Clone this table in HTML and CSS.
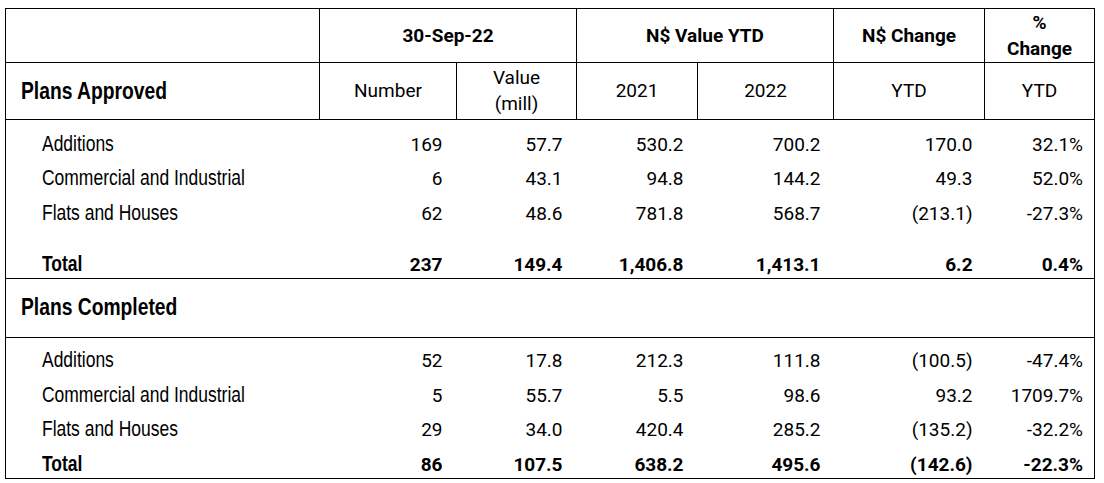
FILE: index.html
```html
<!DOCTYPE html>
<html lang="en">
<head>
<meta charset="utf-8">
<title>Building Plans</title>
<link rel="stylesheet" href="styles.css">
</head>
<body>
<table class="report">
  <colgroup>
    <col class="c-label">
    <col class="c-num">
    <col class="c-val">
    <col class="c-y1">
    <col class="c-y2">
    <col class="c-chg">
    <col class="c-pct">
  </colgroup>
  <thead>
    <tr class="head-top">
      <th></th>
      <th colspan="2">30-Sep-22</th>
      <th colspan="2">N$ Value YTD</th>
      <th>N$ Change</th>
      <th>%<br>Change</th>
    </tr>
    <tr class="head-sub">
      <th class="section-label"><span class="narrow">Plans Approved</span></th>
      <th>Number</th>
      <th>Value<br>(mill)</th>
      <th>2021</th>
      <th>2022</th>
      <th>YTD</th>
      <th>YTD</th>
    </tr>
  </thead>
  <tbody>
    <tr class="spacer-top"><td colspan="7"></td></tr>
    <tr class="row">
      <td class="label"><span class="narrow">Additions</span></td><td class="num">169</td><td class="num">57.7</td><td class="num">530.2</td><td class="num y2">700.2</td><td class="num chg">170.0</td><td class="num pct">32.1%</td>
    </tr>
    <tr class="row">
      <td class="label"><span class="narrow">Commercial and Industrial</span></td><td class="num">6</td><td class="num">43.1</td><td class="num">94.8</td><td class="num y2">144.2</td><td class="num chg">49.3</td><td class="num pct">52.0%</td>
    </tr>
    <tr class="row">
      <td class="label"><span class="narrow">Flats and Houses</span></td><td class="num">62</td><td class="num">48.6</td><td class="num">781.8</td><td class="num y2">568.7</td><td class="num chg">(213.1)</td><td class="num pct">-27.3%</td>
    </tr>
    <tr class="spacer-mid"><td colspan="7"></td></tr>
    <tr class="total total-a">
      <td class="label"><span class="narrow">Total</span></td><td class="num">237</td><td class="num">149.4</td><td class="num">1,406.8</td><td class="num y2">1,413.1</td><td class="num chg">6.2</td><td class="num pct">0.4%</td>
    </tr>
    <tr class="section">
      <td class="section-label"><span class="narrow">Plans Completed</span></td><td colspan="6"></td>
    </tr>
    <tr class="spacer-top2"><td colspan="7"></td></tr>
    <tr class="row">
      <td class="label"><span class="narrow">Additions</span></td><td class="num">52</td><td class="num">17.8</td><td class="num">212.3</td><td class="num y2">111.8</td><td class="num chg">(100.5)</td><td class="num pct">-47.4%</td>
    </tr>
    <tr class="row">
      <td class="label"><span class="narrow">Commercial and Industrial</span></td><td class="num">5</td><td class="num">55.7</td><td class="num">5.5</td><td class="num y2">98.6</td><td class="num chg">93.2</td><td class="num pct">1709.7%</td>
    </tr>
    <tr class="row">
      <td class="label"><span class="narrow">Flats and Houses</span></td><td class="num">29</td><td class="num">34.0</td><td class="num">420.4</td><td class="num y2">285.2</td><td class="num chg">(135.2)</td><td class="num pct">-32.2%</td>
    </tr>
    <tr class="total total-b">
      <td class="label"><span class="narrow">Total</span></td><td class="num">86</td><td class="num">107.5</td><td class="num">638.2</td><td class="num y2">495.6</td><td class="num chg">(142.6)</td><td class="num pct">-22.3%</td>
    </tr>
  </tbody>
</table>
</body>
</html>
```

FILE: styles.css
```css
html, body {
  margin: 0;
  padding: 0;
  background: #ffffff;
}

.report {
  border-collapse: collapse;
  table-layout: fixed;
  width: 1089px;
  margin: 8px 0 0 5px;
  border: 1px solid #000;
  color: #000;
}

.c-label { width: 314px; }
.c-num { width: 137px; }
.c-val { width: 120px; }
.c-y1 { width: 121px; }
.c-y2 { width: 136px; }
.c-chg { width: 151px; }
.c-pct { width: 110px; }

.report th,
.report td {
  padding: 0;
}

.report .head-top th,
.report .head-sub th {
  border: 1px solid #000;
  font-family: Roboto, "Liberation Sans", sans-serif;
  font-size: 19px;
  line-height: 26px;
  text-align: center;
  vertical-align: middle;
}

.report .head-top th {
  height: 53px;
  font-weight: bold;
}

.report .head-sub th {
  height: 56px;
  font-weight: normal;
}

.narrow {
  display: inline-block;
  transform: scaleX(0.82);
  transform-origin: left center;
  white-space: nowrap;
}

.report .head-sub th.section-label,
.report td.section-label {
  font-family: "Liberation Sans", Arial, sans-serif;
  font-weight: bold;
  font-size: 23.5px;
  text-align: left;
  padding-left: 15px;
  vertical-align: middle;
}

.report .label {
  font-family: "Liberation Sans", Arial, sans-serif;
  font-size: 21.3px;
  padding-left: 36px;
  text-align: left;
  white-space: nowrap;
}

.report .num {
  font-family: Roboto, "Liberation Sans", sans-serif;
  font-size: 19px;
  text-align: right;
  padding-right: 14px;
  white-space: nowrap;
}

.report .y2 { padding-right: 13px; }
.report .chg { padding-right: 12px; }
.report .pct { padding-right: 11px; }

.row td {
  height: 34.5px;
  vertical-align: middle;
}

.spacer-top td { height: 7px; }
.spacer-mid td { height: 21px; }
.spacer-top2 td { height: 6px; }

.total td {
  font-weight: bold;
  vertical-align: middle;
}

.report .total .label {
  font-weight: bold;
}

.total-a td {
  height: 26px;
  border-bottom: 1px solid #000;
}

.report .total-b td {
  height: 28px;
  padding-top: 3px;
}

.section td {
  height: 58px;
  border-bottom: 1px solid #000;
}
```
